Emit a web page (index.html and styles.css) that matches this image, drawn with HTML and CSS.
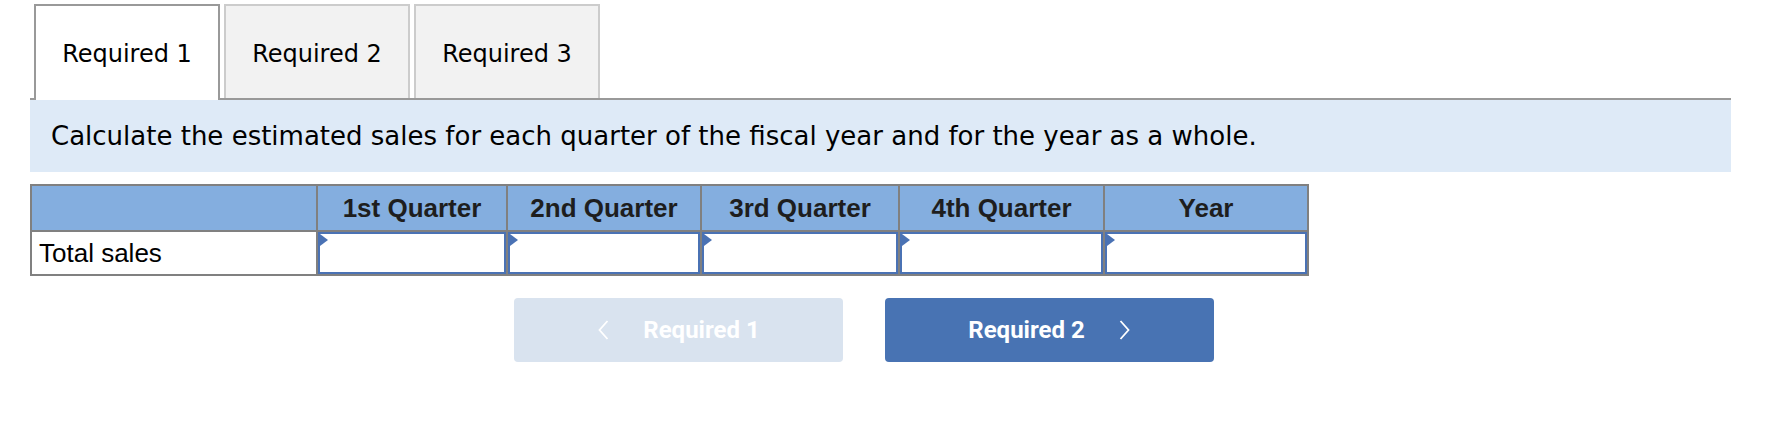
FILE: index.html
```html
<!DOCTYPE html>
<html lang="en">
<head>
   <meta charset="UTF-8">
   <title>Required 1</title>
   <link rel="stylesheet" href="styles.css">
</head>
<body>
   <div class="page">
       <div class="tabs">
           <div class="tab active">Required 1</div>
           <div class="tab">Required 2</div>
           <div class="tab">Required 3</div>
       </div>

       <div class="prompt">Calculate the estimated sales for each quarter of the fiscal year and for the year as a whole.</div>

       <table class="grid">
           <colgroup>
               <col class="c-label">
               <col class="c-q1">
               <col class="c-q2">
               <col class="c-q3">
               <col class="c-q4">
               <col class="c-year">
           </colgroup>
           <thead>
               <tr>
                   <th></th>
                   <th>1st Quarter</th>
                   <th>2nd Quarter</th>
                   <th>3rd Quarter</th>
                   <th>4th Quarter</th>
                   <th>Year</th>
               </tr>
           </thead>
           <tbody>
               <tr>
                   <td class="label">Total sales</td>
                   <td class="entry"><input type="text"></td>
                   <td class="entry"><input type="text"></td>
                   <td class="entry"><input type="text"></td>
                   <td class="entry"><input type="text"></td>
                   <td class="entry"><input type="text"></td>
               </tr>
           </tbody>
       </table>

       <div class="nav">
           <button class="nav-btn prev" disabled>
               <svg width="12" height="22" viewBox="0 0 12 22"><path d="M10.5 2 L2.5 11 L10.5 20" fill="none" stroke="#fff" stroke-width="1.8"/></svg>
               <span>Required 1</span>
           </button>
           <button class="nav-btn next">
               <span>Required 2</span>
               <svg width="12" height="22" viewBox="0 0 12 22"><path d="M1.5 2 L9.5 11 L1.5 20" fill="none" stroke="#fff" stroke-width="1.8"/></svg>
           </button>
       </div>
   </div>
</body>
</html>
```

FILE: styles.css
```css
body {
    margin: 0;
    background: #fff;
    color: #000;
}

.page {
    width: 1701px;
    margin-left: 30px;
    padding-top: 4px;
}

/* tab strip */
.tabs {
    display: flex;
    gap: 4px;
    padding-left: 4px;
    border-bottom: 2px solid #999;
    height: 94px;
}

.tab {
    box-sizing: border-box;
    width: 186px;
    height: 94px;
    padding-top: 3px;
    display: flex;
    align-items: center;
    justify-content: center;
    font-family: "DejaVu Sans", Verdana, sans-serif;
    font-size: 24px;
    background: #f2f2f2;
    border: 2px solid #ccc;
    border-bottom: none;
}

.tab.active {
    background: #fff;
    border-color: #999;
    height: 96px;
    padding-bottom: 2px;
    position: relative;
    z-index: 1;
}

.prompt {
    height: 72px;
    display: flex;
    align-items: center;
    padding-left: 21px;
    background: #deeaf7;
    font-family: "DejaVu Sans", Verdana, sans-serif;
    font-size: 26px;
}

/* data table */
.grid {
    margin-top: 12px;
    border-collapse: collapse;
    table-layout: fixed;
    width: 1279px;
    font-family: "Liberation Sans", Arial, sans-serif;
    font-size: 26px;
}

.c-label { width: 286px; }
.c-q1 { width: 190px; }
.c-q2 { width: 194px; }
.c-q3 { width: 198px; }
.c-q4 { width: 205px; }
.c-year { width: 204px; }

.grid th,
.grid td {
    border: 2px solid #808080;
    padding: 0;
}

.grid th {
    height: 44px;
    background: #84aedf;
    color: #1e1e1e;
    font-weight: bold;
    text-align: center;
}

.grid td {
    height: 42px;
}

.grid td.label {
    padding-left: 7px;
    text-align: left;
}

.grid td.entry {
    position: relative;
}

.grid td.entry input {
    box-sizing: border-box;
    display: block;
    width: 100%;
    height: 42px;
    margin: 0;
    border: 2px solid #4a72b4;
    background: #fff;
    outline: none;
}

/* little blue flag in the corner of each entry box */
.grid td.entry::before {
    content: "";
    position: absolute;
    top: 2px;
    left: 2px;
    border-left: 8px solid #4a72b4;
    border-top: 6px solid transparent;
    border-bottom: 6px solid transparent;
}

/* prev / next buttons */
.nav {
    display: flex;
    gap: 42px;
    margin-top: 22px;
    padding-left: 484px;
}

.nav-btn {
    width: 329px;
    height: 64px;
    border: none;
    border-radius: 4px;
    display: flex;
    align-items: center;
    justify-content: center;
    gap: 34px;
    color: #fff;
    font-family: Roboto, "Liberation Sans", sans-serif;
    font-size: 24px;
    font-weight: bold;
    cursor: pointer;
}

.nav-btn.prev {
    background: #d9e3ef;
    cursor: default;
}

.nav-btn.next {
    background: #4873b3;
}
```
